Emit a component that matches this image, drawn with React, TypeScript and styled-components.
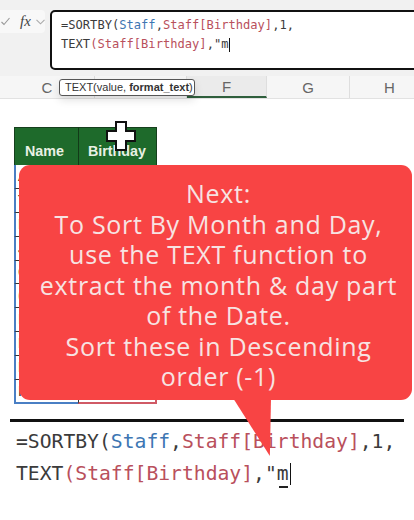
import React from "react";
import styled, { createGlobalStyle } from "styled-components";

const GlobalStyle = createGlobalStyle`
  html, body {
    margin: 0;
    padding: 0;
    background: #ffffff;
  }
`;

const BLUE = "#3d76b3";
const RED = "#b9505c";
const INK = "#3b3b3b";

const Page = styled.div`
  position: relative;
  width: 414px;
  height: 520px;
  overflow: hidden;
  background: #ffffff;
  display: flex;
  flex-direction: column;
`;

const FormulaBar = styled.div`
  height: 76px;
  background: #f1f1f1;
  display: flex;
  align-items: flex-start;
  padding-top: 10px;
  box-sizing: border-box;
`;

const FxBox = styled.div`
  width: 45px;
  height: 23px;
  margin-right: 5px;
  background: #f8f8f8;
  border-radius: 0 4px 4px 0;
  display: flex;
  align-items: center;
  gap: 5px;
  padding-left: 1px;
  box-sizing: border-box;
  color: #8a8a8a;
`;

const Fx = styled.span`
  font-family: "Liberation Serif", serif;
  font-style: italic;
  font-size: 15px;
  color: #444;
  margin-left: 5px;
`;

const FormulaBox = styled.div`
  flex: 1;
  margin-right: -12px;
  height: 60px;
  background: #ffffff;
  border: 2px solid #111;
  border-radius: 5px;
  box-sizing: border-box;
  padding: 4px 0 0 9px;
  font-family: "DejaVu Sans Mono", monospace;
  font-size: 12.1px;
  line-height: 19px;
  color: ${INK};
  white-space: pre;
`;

const Line = styled.div``;

const Tok = styled.span<{ $c?: string }>`
  color: ${(p) => p.$c || INK};
`;

const Caret = styled.span<{ $h: number }>`
  display: inline-block;
  width: 1px;
  height: ${(p) => p.$h}px;
  background: #111;
  vertical-align: middle;
  margin-left: 1px;
`;

const HeaderRow = styled.div`
  position: relative;
  height: 22px;
  background: #f6f6f6;
  border-bottom: 1px solid #e2e2e2;
  display: flex;
`;

const ColHead = styled.div<{ $w: number; $sel?: boolean }>`
  width: ${(p) => p.$w}px;
  flex-shrink: 0;
  display: flex;
  align-items: center;
  justify-content: center;
  font-family: "Liberation Sans", sans-serif;
  font-size: 15px;
  color: #666;
  border-right: 1px solid #dedede;
  box-sizing: border-box;
  border-bottom: ${(p) => (p.$sel ? "2px solid #2f5f3c" : "none")};
  background: ${(p) => (p.$sel ? "#ebebeb" : "transparent")};
`;

const Tooltip = styled.div`
  position: absolute;
  left: 59px;
  top: 3px;
  width: 136px;
  height: 17px;
  box-sizing: border-box;
  border: 1px solid #555;
  border-radius: 3px;
  background: #fff;
  box-shadow: 0 4px 8px rgba(0, 0, 0, 0.12);
  font-family: "Liberation Sans", sans-serif;
  font-size: 11px;
  line-height: 15px;
  color: #333;
  padding-left: 5px;
  white-space: nowrap;
  b {
    font-weight: bold;
  }
`;

const Sheet = styled.div`
  position: relative;
  padding: 28px 0 0 14px;
`;

const Table = styled.div`
  display: grid;
  grid-template-columns: 64px 79px;
  width: 143px;
`;

const HeadCell = styled.div<{ $first?: boolean }>`
  height: 38px;
  background: #1e6a2b;
  color: #e9f1e4;
  font-family: "Liberation Sans", sans-serif;
  font-weight: bold;
  font-size: 14.3px;
  display: flex;
  align-items: center;
  padding: 9px 0 0 ${(p) => (p.$first ? 10 : 9)}px;
  box-sizing: border-box;
  border-left: ${(p) => (p.$first ? "1px solid #163f1d" : "1px solid #123a18")};
  border-top: 1px solid #163f1d;
  border-right: ${(p) => (p.$first ? "none" : "1px solid #163f1d")};
`;

const BodyCell = styled.div<{ $ref: "name" | "date"; $last?: boolean }>`
  height: 23.9px;
  box-sizing: border-box;
  font-family: "Liberation Sans", sans-serif;
  font-size: 14px;
  color: #222;
  padding: 3px 0 0 2px;
  border-bottom: 1px solid #333;
  border-left: ${(p) => (p.$ref === "name" ? `2px solid #4a7fc4` : "1px solid #333")};
  border-right: ${(p) => (p.$ref === "date" ? `2px solid #d05a66` : "none")};
  ${(p) =>
    p.$last &&
    `border-bottom: 2px solid ${p.$ref === "name" ? "#4a7fc4" : "#d05a66"};`}
`;

const Callout = styled.div`
  position: absolute;
  left: 19px;
  top: 165px;
  width: 393px;
  height: 235px;
  border-radius: 11px;
  background: #f84444;
  z-index: 5;
  box-sizing: border-box;
  padding: 13px 0 0 6px;
  text-align: center;
  font-family: "Open Sans", sans-serif;
  font-size: 25px;
  letter-spacing: 0.7px;
  line-height: 30.5px;
  color: #f7e3e2;
  &::after {
    content: "";
    position: absolute;
    left: 214px;
    top: 233px;
    width: 38px;
    height: 58px;
    background: #f84444;
    clip-path: polygon(0 0, 100% 0, 97% 100%);
  }
`;

const Bottom = styled.div`
  margin: 15px 10px 0;
  border-top: 3px solid #111;
  padding: 4px 0 0 6px;
  font-family: "DejaVu Sans Mono", monospace;
  font-size: 19.7px;
  line-height: 32px;
  color: ${INK};
  white-space: pre;
`;

const Under = styled.span`
  position: relative;
  &::after {
    content: "";
    position: absolute;
    left: 2px;
    right: 1px;
    bottom: -3px;
    height: 2px;
    background: #222;
  }
`;

const Formula = ({ caret }: { caret: number }) => (
  <>
    <Line>
      <Tok>=SORTBY(</Tok>
      <Tok $c={BLUE}>Staff</Tok>
      <Tok>,</Tok>
      <Tok $c={RED}>Staff[Birthday]</Tok>
      <Tok>,1,</Tok>
    </Line>
    <Line>
      <Tok>TEXT</Tok>
      <Tok $c={RED}>(Staff[Birthday]</Tok>
      <Tok>,"</Tok>
      {caret > 16 ? <Under>m</Under> : <Tok>m</Tok>}
      <Caret $h={caret} />
    </Line>
  </>
);

const names = ["Ava", "Tom", "Mia", "Jon", "Cal", "(Liz", "Ida", "Fay", "Eve", "Isa"];

export default function App() {
  return (
    <Page>
      <GlobalStyle />
      <FormulaBar>
        <FxBox>
          <svg width="9" height="9" viewBox="0 0 9 9">
            <path d="M0.5 5 L3 7.5 L8.5 1" fill="none" stroke="#999" strokeWidth="1.1" />
          </svg>
          <Fx>fx</Fx>
          <svg width="9" height="6" viewBox="0 0 9 6">
            <path d="M0.5 0.8 L4.5 4.8 L8.5 0.8" fill="none" stroke="#aaa" strokeWidth="1.1" />
          </svg>
        </FxBox>
        <FormulaBox>
          <Formula caret={14} />
        </FormulaBox>
      </FormulaBar>

      <HeaderRow>
        <ColHead $w={95}>C</ColHead>
        <ColHead $w={92} />
        <ColHead $w={80} $sel>F</ColHead>
        <ColHead $w={83}>G</ColHead>
        <ColHead $w={80}>H</ColHead>
        <Tooltip>
          TEXT(value, <b>format_text</b>)
        </Tooltip>
      </HeaderRow>

      <Sheet>
        <Table>
          <HeadCell $first>Name</HeadCell>
          <HeadCell>Birthday</HeadCell>
          {names.map((n, i) => (
            <React.Fragment key={n}>
              <BodyCell $ref="name" $last={i === names.length - 1}>
                {n}
              </BodyCell>
              <BodyCell $ref="date" $last={i === names.length - 1} />
            </React.Fragment>
          ))}
        </Table>
        <svg
          style={{ position: "absolute", left: 106, top: 22 }}
          width="30"
          height="30"
          viewBox="0 0 30 30"
        >
          <path
            d="M10 1 H20 V10 H29 V20 H20 V29 H10 V20 H1 V10 H10 Z"
            fill="#fff"
            stroke="#111"
            strokeWidth="2"
          />
        </svg>
      </Sheet>

      <Callout>
        Next:
        <br />
        To Sort By Month and Day,
        <br />
        use the TEXT function to
        <br />
        extract the month &amp; day part
        <br />
        of the Date.
        <br />
        Sort these in Descending
        <br />
        order (-1)
      </Callout>

      <Bottom>
        <Formula caret={22} />
      </Bottom>
    </Page>
  );
}
